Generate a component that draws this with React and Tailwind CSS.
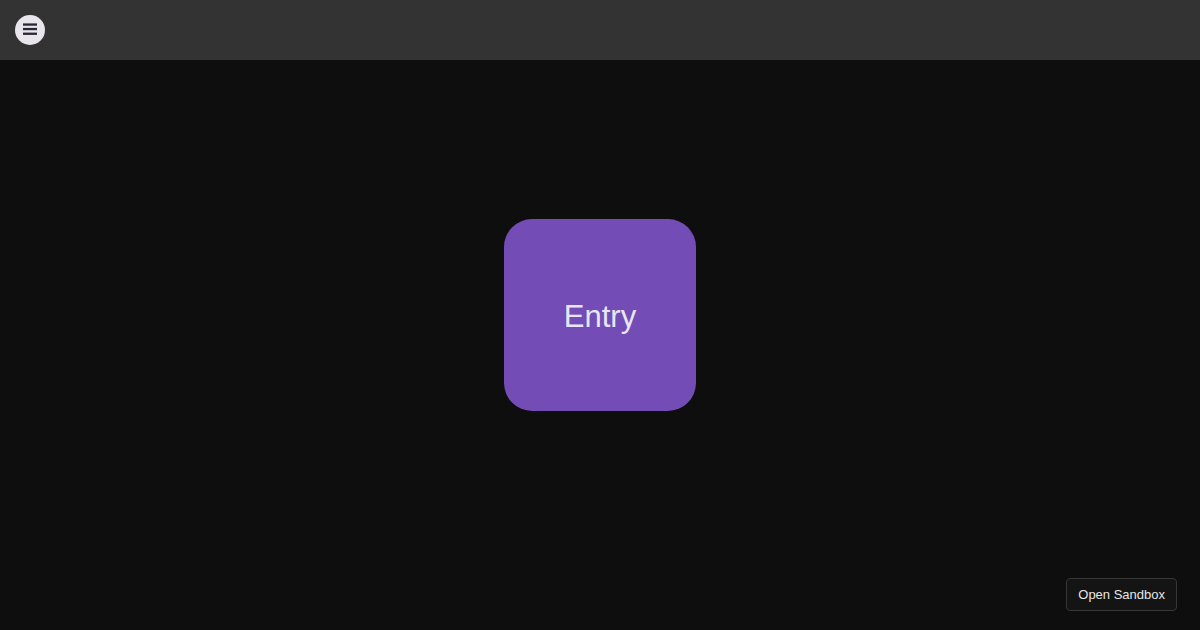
import React from 'react';

export default function App() {
  return (
    <div className="w-[1200px] h-[630px] flex flex-col bg-[#0e0e0e] overflow-hidden" style={{ fontFamily: '"Liberation Sans", Arial, sans-serif' }}>
      {/* Top bar */}
      <header className="h-[60px] flex-shrink-0 bg-[#333333] flex items-center px-[15px]">
        <button className="w-[30px] h-[30px] rounded-full bg-[#e8e6ec] flex items-center justify-center">
          <svg width="14" height="14" viewBox="0 0 14 14">
            <rect x="0" y="0.4" width="14" height="2.3" fill="#2b2633" />
            <rect x="0" y="4.9" width="14" height="2.3" fill="#2b2633" />
            <rect x="0" y="9.6" width="14" height="2.3" fill="#2b2633" />
          </svg>
        </button>
      </header>

      {/* Canvas */}
      <main className="relative flex-1 flex items-center justify-center pb-[60px]">
        <div className="w-[192px] h-[192px] rounded-[28px] bg-[#734cb6] flex items-center justify-center">
          <span className="text-[31px] text-[#e8e6f2] leading-none mt-[2px]">Entry</span>
        </div>

        <button className="absolute right-[23px] bottom-[19px] h-[33px] px-[11px] rounded-[4px] border border-[#363636] bg-[#141414] text-[13px] text-[#e6e6e6]">
          Open Sandbox
        </button>
      </main>
    </div>
  );
}
